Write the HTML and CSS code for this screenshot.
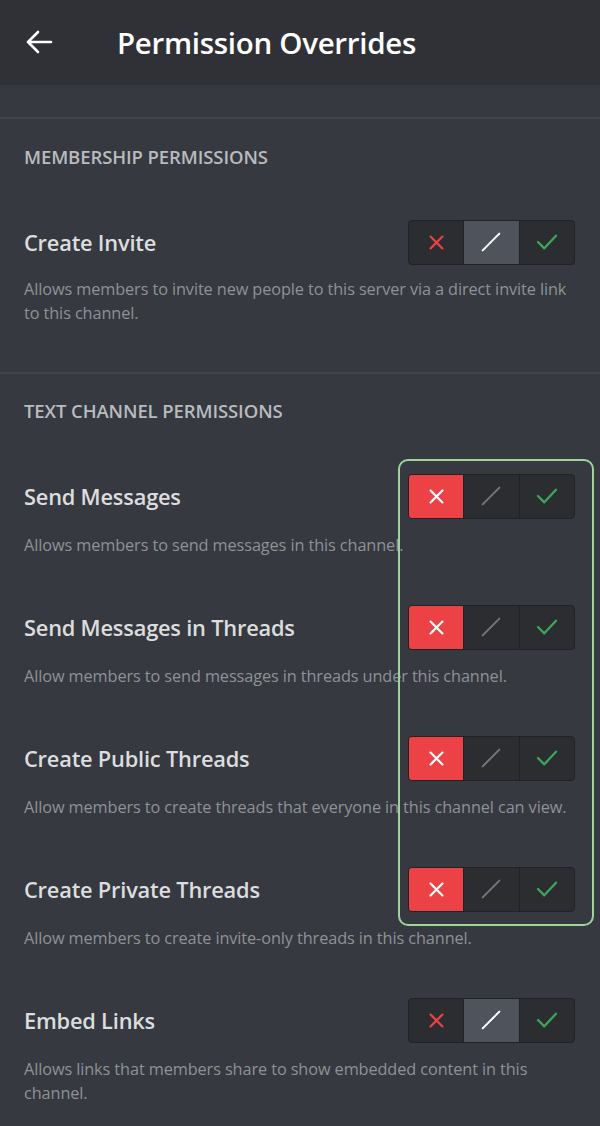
FILE: index.html
```html
<!DOCTYPE html>
<html>
<head>
<meta charset="utf-8">
<link rel="stylesheet" href="styles.css">
</head>
<body>
<div class="app">
  <header class="topbar">
    <svg class="back" width="28" height="24" viewBox="0 0 28 24"><path d="M26 12H3M13 2L3 12l10 10" fill="none" stroke="#fff" stroke-width="2.6" stroke-linecap="round" stroke-linejoin="round"/></svg>
    <h1 class="title">Permission Overrides</h1>
  </header>
  <div class="gapband"></div>
  <div class="divider"></div>

  <section class="section">
    <h2 class="heading">MEMBERSHIP PERMISSIONS</h2>
    <div class="item">
      <div class="row">
        <span class="name">Create Invite</span>
        <div class="toggle state-neutral">
          <span class="seg deny"><svg viewBox="0 0 20 20"><path d="M3 3l14 14M17 3L3 17"/></svg></span>
          <span class="seg mid"><svg viewBox="0 0 24 24"><path d="M2 22L22 2"/></svg></span>
          <span class="seg allow"><svg viewBox="0 0 24 20"><path d="M2 10l7 7L22 3"/></svg></span>
        </div>
      </div>
      <p class="desc">Allows members to invite new people to this server via a direct invite link to this channel.</p>
    </div>
  </section>
  <div class="divider"></div>

  <section class="section second">
    <h2 class="heading">TEXT CHANNEL PERMISSIONS</h2>
    <div class="item">
      <div class="row">
        <span class="name">Send Messages</span>
        <div class="toggle state-deny">
          <span class="seg deny"><svg viewBox="0 0 20 20"><path d="M3 3l14 14M17 3L3 17"/></svg></span>
          <span class="seg mid"><svg viewBox="0 0 24 24"><path d="M2 22L22 2"/></svg></span>
          <span class="seg allow"><svg viewBox="0 0 24 20"><path d="M2 10l7 7L22 3"/></svg></span>
        </div>
      </div>
      <p class="desc">Allows members to send messages in this channel.</p>
    </div>
    <div class="item">
      <div class="row">
        <span class="name">Send Messages in Threads</span>
        <div class="toggle state-deny">
          <span class="seg deny"><svg viewBox="0 0 20 20"><path d="M3 3l14 14M17 3L3 17"/></svg></span>
          <span class="seg mid"><svg viewBox="0 0 24 24"><path d="M2 22L22 2"/></svg></span>
          <span class="seg allow"><svg viewBox="0 0 24 20"><path d="M2 10l7 7L22 3"/></svg></span>
        </div>
      </div>
      <p class="desc">Allow members to send messages in threads under this channel.</p>
    </div>
    <div class="item">
      <div class="row">
        <span class="name">Create Public Threads</span>
        <div class="toggle state-deny">
          <span class="seg deny"><svg viewBox="0 0 20 20"><path d="M3 3l14 14M17 3L3 17"/></svg></span>
          <span class="seg mid"><svg viewBox="0 0 24 24"><path d="M2 22L22 2"/></svg></span>
          <span class="seg allow"><svg viewBox="0 0 24 20"><path d="M2 10l7 7L22 3"/></svg></span>
        </div>
      </div>
      <p class="desc">Allow members to create threads that everyone in this channel can view.</p>
    </div>
    <div class="item">
      <div class="row">
        <span class="name">Create Private Threads</span>
        <div class="toggle state-deny">
          <span class="seg deny"><svg viewBox="0 0 20 20"><path d="M3 3l14 14M17 3L3 17"/></svg></span>
          <span class="seg mid"><svg viewBox="0 0 24 24"><path d="M2 22L22 2"/></svg></span>
          <span class="seg allow"><svg viewBox="0 0 24 20"><path d="M2 10l7 7L22 3"/></svg></span>
        </div>
      </div>
      <p class="desc">Allow members to create invite-only threads in this channel.</p>
    </div>
    <div class="item">
      <div class="row">
        <span class="name">Embed Links</span>
        <div class="toggle state-neutral">
          <span class="seg deny"><svg viewBox="0 0 20 20"><path d="M3 3l14 14M17 3L3 17"/></svg></span>
          <span class="seg mid"><svg viewBox="0 0 24 24"><path d="M2 22L22 2"/></svg></span>
          <span class="seg allow"><svg viewBox="0 0 24 20"><path d="M2 10l7 7L22 3"/></svg></span>
        </div>
      </div>
      <p class="desc">Allows links that members share to show embedded content in this channel.</p>
    </div>
    <div class="highlight"></div>
  </section>
</div>
</body>
</html>
```

FILE: styles.css
```css
* { box-sizing: border-box; }
html, body { margin: 0; padding: 0; }
body {
  background: #36393f;
  font-family: "Open Sans", "Noto Sans", sans-serif;
  width: 600px;
  height: 1126px;
  overflow: hidden;
}
.app { width: 600px; }
.topbar {
  height: 85px;
  background: #2f3136;
  display: flex;
  align-items: center;
  padding-left: 25px;
}
.back { width: 28px; height: 24px; display: block; margin-top: -2px; }
.title {
  margin: 0 0 0 64px;
  font-size: 29.5px;
  font-weight: 600;
  color: #ffffff;
  letter-spacing: -0.3px;
  line-height: 1;
}
.gapband { height: 32px; background: #36393f; }
.divider { height: 2px; background: #40434a; }
.section {
  padding: 26px 25px 0 24px;
  position: relative;
}
.section.second { padding-top: 25px; }
.heading {
  margin: 0;
  font-size: 18.5px;
  line-height: 24px;
  font-weight: 600;
  color: #b9bbbe;
  letter-spacing: -0.1px;
}
.item { padding-top: 48px; }
.section .item:first-of-type { padding-top: 51px; }
.row {
  display: flex;
  align-items: center;
  justify-content: space-between;
  height: 44px;
}
.name {
  font-size: 21.8px;
  font-weight: 600;
  color: #dcddde;
  letter-spacing: -0.2px;
}
.desc {
  margin: 15px -4px 0 0;
  font-size: 16.3px;
  line-height: 24px;
  color: #8e9297;
  letter-spacing: -0.1px;
}
.section:first-of-type .item:first-of-type { padding-top: 51px; }
.section:first-of-type .desc { margin-top: 13px; margin-bottom: 47px; }
.toggle {
  width: 167px;
  height: 45px;
  flex: none;
  display: flex;
  border: 1px solid #202225;
  border-radius: 4px;
  background: #2b2d31;
  overflow: hidden;
}
.seg {
  flex: 1;
  display: flex;
  align-items: center;
  justify-content: center;
}
.seg.mid { border-left: 1px solid #202225; border-right: 1px solid #202225; }
.seg svg { fill: none; stroke-linecap: round; stroke-linejoin: round; }
.seg.deny svg { width: 17px; height: 17px; stroke: #ed4245; stroke-width: 2.6; }
.seg.mid svg { width: 20px; height: 20px; stroke: #72767d; stroke-width: 2.4; }
.seg.allow svg { width: 22px; height: 18px; stroke: #3ba55c; stroke-width: 2.6; }
.state-deny .seg.deny { background: #ed4245; }
.state-deny .seg.deny svg { stroke: #ffffff; }
.state-neutral .seg.mid { background: #4f545c; }
.state-neutral .seg.mid svg { stroke: #ffffff; }
.highlight {
  position: absolute;
  left: 398px;
  top: 85px;
  width: 196px;
  height: 467px;
  border: 2.5px solid #9fd49a;
  border-radius: 10px;
  pointer-events: none;
}
```
